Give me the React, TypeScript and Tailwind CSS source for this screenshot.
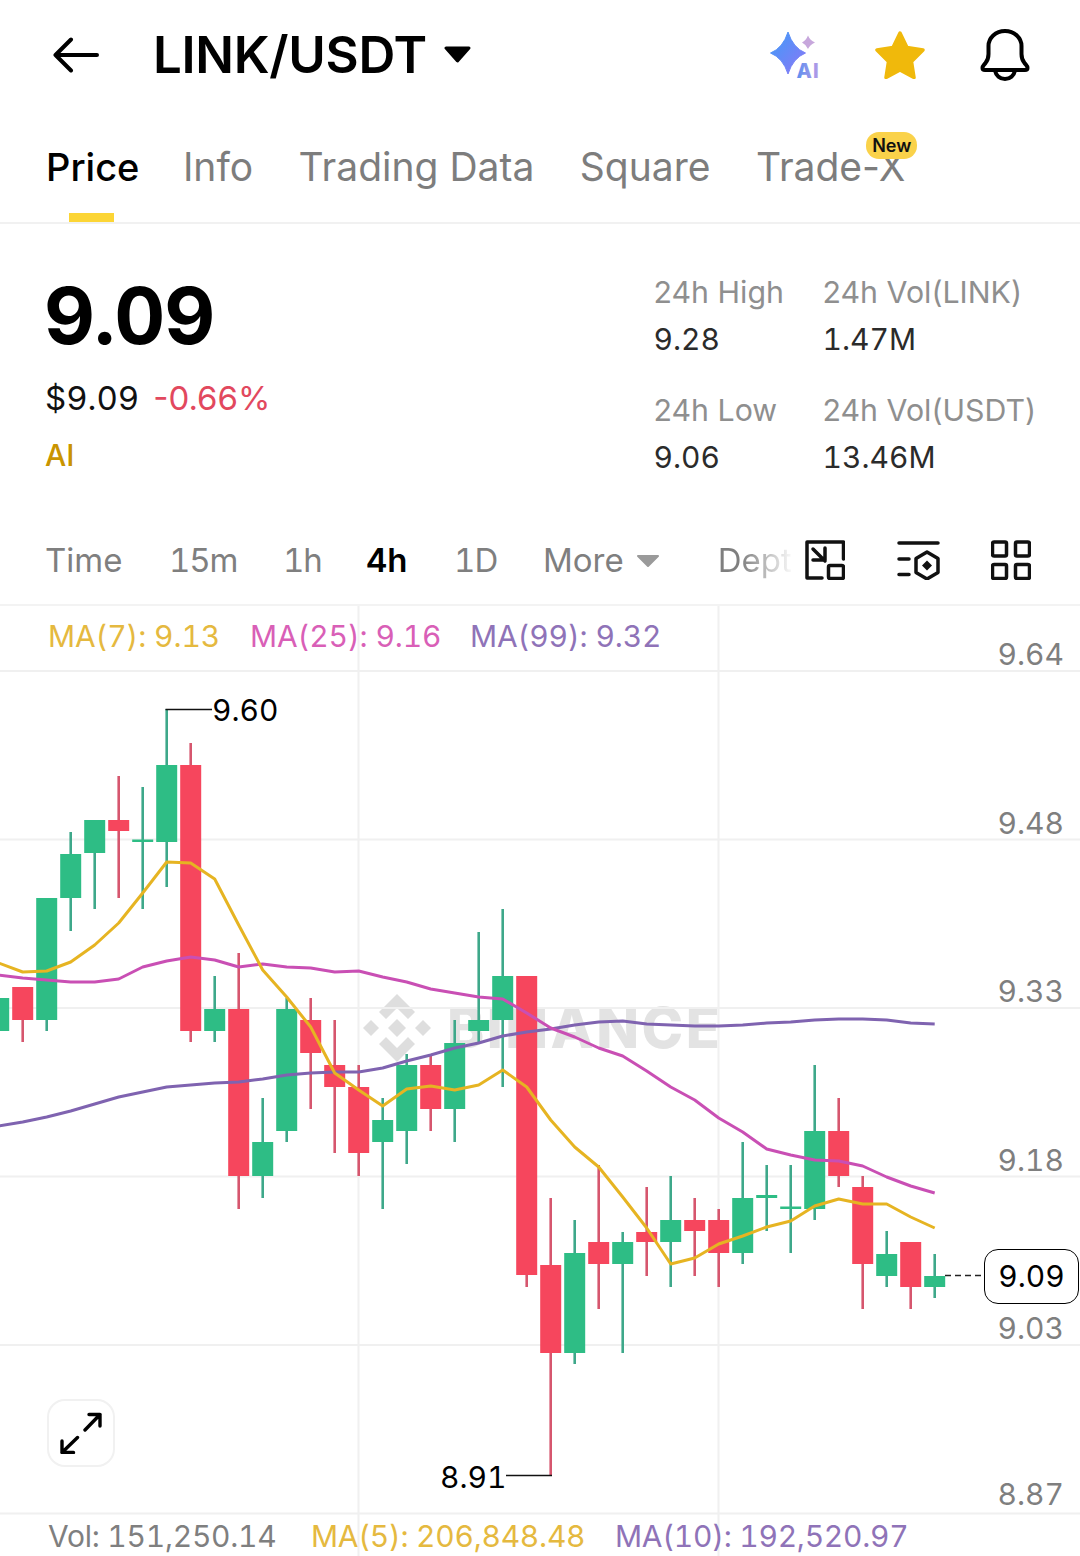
import { ReactNode } from "react";

type Candle = [high: number, top: number, bottom: number, low: number, dir: "g" | "r"];

// page-pixel y values, one candle every 24px starting at x = -1.3
const candles: Candle[] = [
  [998, 998, 1031, 1054, "g"],
  [987, 987, 1020, 1042, "r"],
  [898, 898, 1020, 1031, "g"],
  [832, 854, 898, 931, "g"],
  [820, 820, 853, 909, "g"],
  [776, 820, 831, 898, "r"],
  [787, 839.5, 842, 909, "g"],
  [709, 765, 842, 887, "g"],
  [743, 765, 1031, 1042, "r"],
  [976, 1009, 1031, 1042, "g"],
  [953, 1009, 1176, 1209, "r"],
  [1098, 1142, 1176, 1198, "g"],
  [998, 1009, 1131, 1142, "g"],
  [998, 1020, 1053, 1109, "r"],
  [1020, 1065, 1087, 1153, "r"],
  [1065, 1087, 1153, 1176, "r"],
  [1098, 1120, 1142, 1209, "g"],
  [1054, 1065, 1131, 1164, "g"],
  [1054, 1065, 1109, 1131, "r"],
  [1020, 1043, 1109, 1142, "g"],
  [932, 1020, 1031, 1043, "g"],
  [909, 976, 1020, 1087, "g"],
  [976, 976, 1275, 1287, "r"],
  [1198, 1265, 1353, 1476, "r"],
  [1220, 1253, 1353, 1364, "g"],
  [1165, 1242, 1264, 1309, "r"],
  [1232, 1242, 1264, 1353, "g"],
  [1187, 1232, 1242, 1276, "r"],
  [1176, 1220, 1242, 1287, "g"],
  [1198, 1220, 1231, 1276, "r"],
  [1209, 1220, 1253, 1287, "r"],
  [1142, 1198, 1253, 1264, "g"],
  [1165, 1195, 1198, 1231, "g"],
  [1165, 1206.5, 1209, 1253, "g"],
  [1065, 1131, 1209, 1220, "g"],
  [1098, 1131, 1176, 1187, "r"],
  [1176, 1187, 1264, 1309, "r"],
  [1231, 1254, 1276, 1287, "g"],
  [1242, 1242, 1287, 1309, "r"],
  [1254, 1276, 1287, 1298, "g"],
];

const ma7 = [963, 972, 971, 962, 945, 923, 893, 862, 863, 879, 925, 970, 997, 1027, 1073, 1090, 1106, 1089, 1086, 1090, 1085, 1070, 1087, 1120, 1147, 1167, 1197, 1228, 1264, 1258, 1244, 1236, 1227, 1221, 1206, 1199, 1204, 1204, 1217, 1228];
const ma25 = [972, 975, 978, 980, 982, 982, 979, 967, 961, 957, 960, 967, 964, 967, 968, 972, 971, 977, 982, 989, 993, 997, 999, 1013, 1028, 1037, 1048, 1056, 1071, 1087, 1100, 1118, 1132, 1149, 1155, 1160, 1161, 1166, 1177, 1186, 1193];
const ma99 = [1126, 1122, 1117, 1111, 1104, 1097, 1092, 1087, 1085, 1083, 1082, 1079, 1075, 1073, 1072, 1072, 1068, 1061, 1055, 1048, 1043, 1036, 1032, 1029, 1025, 1022, 1021, 1024, 1025, 1026, 1026, 1025, 1023, 1022, 1020, 1019, 1019, 1020, 1023, 1024];

const px = (i: number) => -1.3 + 24 * i;

function maPoints(ys: number[], start: number) {
  return ys.map((y, i) => `${px(i + start)},${y}`).join(" ");
}

function BackArrow() {
  return (
    <svg width="46" height="36" viewBox="0 0 46 36" fill="none" stroke="#000" strokeWidth="4" strokeLinecap="round" strokeLinejoin="round">
      <path d="M2.5 18H44M18 2.5 2.5 18 18 33.5" />
    </svg>
  );
}

function AiIcon() {
  return (
    <svg width="54" height="50" viewBox="768 28 54 50">
      <defs>
        <linearGradient id="ai-star" x1="0" y1="0" x2="1" y2="1">
          <stop offset="0" stopColor="#3f9cf8" />
          <stop offset="1" stopColor="#8d76f6" />
        </linearGradient>
        <linearGradient id="ai-text" x1="0" y1="0" x2="1" y2="0">
          <stop offset="0" stopColor="#5b8ff0" />
          <stop offset="1" stopColor="#b79be6" />
        </linearGradient>
      </defs>
      <path d="M788 30 Q793 46 805.500 51 Q793 56 788 72 Q783 56 770.500 51 Q783 46 788 30Z" fill="url(#ai-star)" stroke="url(#ai-star)" strokeWidth="1" strokeLinejoin="round" />
      <path d="M808 33.500 Q810 38.500 815 40.500 Q810 42.500 808 47 Q806 42.500 802 40.500 Q806 38.500 808 33.500Z" fill="#c7a7dc" />
      <text x="796.500" y="75.500" fontSize="20" fontWeight="800" letterSpacing="1" fill="url(#ai-text)" stroke="#fff" strokeWidth="3" paintOrder="stroke" fontFamily="Inter, sans-serif">AI</text>
    </svg>
  );
}

function StarIcon() {
  return (
    <svg width="50" height="48" viewBox="875 30 50 48">
      <path d="M900 32 907 46.500 923 49 911.500 60.500 914 76.500 900 69 886 76.500 888.500 60.500 877 49 893 46.500Z" fill="#f0b90b" stroke="#f0b90b" strokeWidth="3.500" strokeLinejoin="round" />
    </svg>
  );
}

function BellIcon() {
  return (
    <svg width="50" height="52" viewBox="0 0 50 52" fill="none" stroke="#000" strokeWidth="4" strokeLinecap="round" strokeLinejoin="round">
      <path d="M2.500 39c0-2 1.500-3 3-5 2.500-3 3-5.500 3-9v-8C8.500 9 15.500 2 25 2s16.500 7 16.500 15v8c0 3.500.5 6 3 9 1.500 2 3 3 3 5 0 1.300-1 2-2.500 2H5c-1.500 0-2.500-.7-2.500-2Z" />
      <path d="M15 41.500c1 5 5 8.500 10 8.500s9-3.500 10-8.500" />
    </svg>
  );
}

function ShrinkIcon() {
  return (
    <svg width="40" height="40" viewBox="805 540 40 40" fill="none" stroke="#111" strokeWidth="3.500" strokeLinecap="round" strokeLinejoin="round">
      <path d="M822 578H807V542H843.500V559" />
      <rect x="828.500" y="565.500" width="15" height="13" rx="1.500" />
      <path d="M813 549 825 561M813 560H825V548" />
    </svg>
  );
}

function SettingsIcon() {
  return (
    <svg width="44" height="40" viewBox="896 541 44 40" fill="none" stroke="#111" strokeWidth="3.500" strokeLinecap="round" strokeLinejoin="round">
      <path d="M898 544H937M898 560H908M898 575.500H908" />
      <path d="M926 553 937 559.500V573.500L926 580 915 573.500V559.500Z" />
      <path d="M926 561.500 931 566.500 926 571.500 921 566.500Z" fill="#111" stroke="none" />
    </svg>
  );
}

function GridIcon() {
  return (
    <svg width="40" height="40" viewBox="991 540 40 40" fill="none" stroke="#111" strokeWidth="3.500" strokeLinejoin="round">
      <rect x="992.500" y="542" width="14" height="14" rx="1.500" />
      <rect x="1015.500" y="542" width="14" height="14" rx="1.500" />
      <rect x="992.500" y="564.500" width="14" height="14" rx="1.500" />
      <rect x="1015.500" y="564.500" width="14" height="14" rx="1.500" />
    </svg>
  );
}

function Stat({ label, value }: { label: string; value: string }) {
  return (
    <div className="flex flex-col">
      <span className="text-[30.3px] leading-[38px] text-[#8f8f8f] whitespace-nowrap">{label}</span>
      <span className="mt-[9px] text-[30px] leading-[38px] text-[#2b2b2b] tabular-nums">{value}</span>
    </div>
  );
}

function Tab({ active, children }: { active?: boolean; children: ReactNode }) {
  return (
    <span className={active ? "relative -mr-[2px] text-[38px] leading-[46px] font-medium text-black" : "relative text-[39px] leading-[46px] text-[#7d7d7d]"}>
      {children}
      {active && <span className="absolute left-[23px] top-[69px] h-[9px] w-[45px] bg-[#fcd535]" />}
    </span>
  );
}

function PriceLabel({ className, children }: { className: string; children: ReactNode }) {
  return <span className={`absolute text-[30px] leading-[38px] tabular-nums ${className}`}>{children}</span>;
}

export default function App() {
  return (
    <div className="h-[1556px] w-[1080px] overflow-hidden bg-white font-['Inter',sans-serif]">
      {/* header */}
      <div className="flex h-[110px] items-center pl-[53px] pr-[50px]">
        <BackArrow />
        <span className="ml-[54px] text-[51px] font-semibold tracking-[-0.3px] text-black">LINK/USDT</span>
        <svg width="27" height="17" viewBox="0 0 27 17" className="ml-[17px] -mt-[2px]">
          <path d="M2 2H25L13.500 15Z" fill="#000" stroke="#000" strokeWidth="3" strokeLinejoin="round" />
        </svg>
        <div className="ml-auto flex items-center">
          <AiIcon />
          <span className="ml-[53px] flex"><StarIcon /></span>
          <span className="ml-[55px] flex"><BellIcon /></span>
        </div>
      </div>

      {/* tabs */}
      <div className="flex h-[114px] border-b-2 border-[#f1f1f1] pl-[46px] pt-[34px]">
        <div className="flex gap-[45.5px]">
          <Tab active>Price</Tab>
          <Tab>Info</Tab>
          <Tab>Trading Data</Tab>
          <Tab>Square</Tab>
          <Tab>
            Trade-X
            <span className="absolute -top-[12px] right-[-12px] rounded-[13px] bg-[#fad24a] px-[6px] text-[18px] leading-[27px] font-semibold text-[#111]">New</span>
          </Tab>
        </div>
      </div>

      {/* price + 24h stats */}
      <div className="flex h-[306px] pl-[44px] pr-[44px] pt-[46px]">
        <div className="flex flex-col">
          <span className="text-[79px] leading-[90px] font-bold tracking-[-1px] text-black tabular-nums">9.09</span>
          <div className="mt-[16px] ml-[1px] flex items-baseline gap-[14px] text-[33px] leading-[44px]">
            <span className="text-[#111] tabular-nums">$9.09</span>
            <span className="text-[#e2485e]">-0.66%</span>
          </div>
          <span className="mt-[15px] ml-[1px] text-[30px] leading-[40px] font-medium text-[#c99400]">AI</span>
        </div>
        <div className="ml-auto mt-[3px] grid grid-cols-[169px_auto] content-start gap-y-[33px]">
          <Stat label="24h High" value="9.28" />
          <Stat label="24h Vol(LINK)" value="1.47M" />
          <Stat label="24h Low" value="9.06" />
          <Stat label="24h Vol(USDT)" value="13.46M" />
        </div>
      </div>

      {/* interval toolbar */}
      <div className="flex h-[76px] items-center border-b-2 border-[#f3f3f3] pb-[12px] pl-[45px] pr-[49px] text-[33px] text-[#7f7f7f] tabular-nums">
        <span className="w-[124px]">Time</span>
        <span className="w-[114px] tracking-[-1.2px]">15m</span>
        <span className="w-[83px] tracking-[-1.2px]">1h</span>
        <span className="w-[88px] font-semibold text-black">4h</span>
        <span className="w-[89px] tracking-[-0.8px]">1D</span>
        <span>More</span>
        <svg width="24" height="14" viewBox="0 0 24 14" className="ml-[12px]">
          <path d="M2 2H22L12 12Z" fill="#9a9a9a" stroke="#9a9a9a" strokeWidth="2" strokeLinejoin="round" />
        </svg>
        <span className="ml-[58px] w-[76px] overflow-hidden bg-gradient-to-r from-[#7f7f7f] from-30% to-transparent to-100% bg-clip-text text-transparent">Depth</span>
        <div className="-mt-[2px] ml-auto flex items-center">
          <ShrinkIcon />
          <span className="ml-[52px] flex"><SettingsIcon /></span>
          <span className="ml-[50px] flex"><GridIcon /></span>
        </div>
      </div>

      {/* chart */}
      <div className="relative flex h-[950px] flex-col">
        <div className="absolute left-[361px] top-[388px] flex items-center">
          <svg width="72" height="68" viewBox="-36 -34 72 68" fill="#dedede">
            <path d="M0 -9 9 0 0 9 -9 0Z" />
            <path d="M-26 -8 -18 0 -26 8 -34 0Z" />
            <path d="M26 -8 34 0 26 8 18 0Z" />
            <path d="M0 -34 18 -16 11 -9 0 -20 -11 -9 -18 -16Z" />
            <path d="M0 34 18 16 11 9 0 20 -11 9 -18 16Z" />
          </svg>
          <span className="ml-[14px] text-[56px] leading-[68px] font-extrabold tracking-[2.5px] text-[#e3e3e3]">BINANCE</span>
        </div>

        <svg width="1080" height="950" viewBox="0 606 1080 950" className="absolute inset-0">
          {[671, 839.5, 1008, 1176.5, 1345, 1513.5].map((y) => (
            <line key={y} x1="0" x2="1080" y1={y} y2={y} stroke="#f0f0f0" strokeWidth="2" />
          ))}
          <line x1="358.500" x2="358.500" y1="606" y2="1556" stroke="#f0f0f0" strokeWidth="2" />
          <line x1="718.500" x2="718.500" y1="606" y2="1556" stroke="#f0f0f0" strokeWidth="2" />

          {candles.map(([high, top, bottom, low, dir], i) => (
            <g key={i}>
              <line x1={px(i)} x2={px(i)} y1={high} y2={low} stroke={dir === "g" ? "#3ea88a" : "#d6566e"} strokeWidth="2.6" />
              <rect x={px(i) - 10.5} y={top} width="21" height={bottom - top} fill={dir === "g" ? "#2ebd85" : "#f6465d"} />
            </g>
          ))}

          <polyline points={maPoints(ma99, 0)} fill="none" stroke="#7f63b0" strokeWidth="3" strokeLinejoin="round" />
          <polyline points={maPoints(ma25, -1)} fill="none" stroke="#c94fb4" strokeWidth="3" strokeLinejoin="round" />
          <polyline points={maPoints(ma7, 0)} fill="none" stroke="#e6b422" strokeWidth="3" strokeLinejoin="round" />

          <line x1="165.500" x2="212" y1="709.500" y2="709.500" stroke="#111" strokeWidth="1.500" />
          <line x1="506" x2="552" y1="1475.500" y2="1475.500" stroke="#111" strokeWidth="1.500" />
          <line x1="945" x2="984" y1="1275.500" y2="1275.500" stroke="#222" strokeWidth="1.500" strokeDasharray="6 4" />
        </svg>

        {/* MA legend */}
        <div className="relative flex h-[60px] items-center pl-[48px] text-[30px] leading-none tracking-[-0.1px] tabular-nums">
          <span className="w-[202px] text-[#e5b93f]">MA(7): 9.13</span>
          <span className="w-[220px] text-[#d95fb7]">MA(25): 9.16</span>
          <span className="text-[#8f73b8]">MA(99): 9.32</span>
        </div>

        <div className="grow" />

        {/* volume legend */}
        <div className="relative flex h-[40px] items-center pl-[48px] text-[30px] leading-none tracking-[-0.25px] tabular-nums">
          <span className="w-[263px] text-[#7f7f7f]">Vol: 151,250.14</span>
          <span className="w-[304px] text-[#e5b93f]">MA(5): 206,848.48</span>
          <span className="text-[#8f73b8]">MA(10): 192,520.97</span>
        </div>

        {/* overlays on the chart */}
        <PriceLabel className="right-[16px] top-[29px] text-[#7f7f7f]">9.64</PriceLabel>
        <PriceLabel className="right-[16px] top-[198px] text-[#7f7f7f]">9.48</PriceLabel>
        <PriceLabel className="right-[16px] top-[366px] text-[#7f7f7f]">9.33</PriceLabel>
        <PriceLabel className="right-[16px] top-[535px] text-[#7f7f7f]">9.18</PriceLabel>
        <PriceLabel className="right-[16px] top-[703px] text-[#7f7f7f]">9.03</PriceLabel>
        <PriceLabel className="right-[16px] top-[869px] text-[#7f7f7f]">8.87</PriceLabel>
        <PriceLabel className="left-[212px] top-[85px] text-black">9.60</PriceLabel>
        <PriceLabel className="left-[440px] top-[852px] text-black">8.91</PriceLabel>

        <div className="absolute right-[1px] top-[643px] flex h-[55px] w-[95px] items-center justify-center rounded-[14px] border-[1.5px] border-black bg-white text-[30px] text-black tabular-nums">
          9.09
        </div>

        <div className="absolute left-[47px] top-[793px] flex h-[68px] w-[68px] items-center justify-center rounded-[18px] border-2 border-[#f1f1f1] bg-white">
          <svg width="42" height="42" viewBox="60 1411 42 42" fill="none" stroke="#000" strokeWidth="3.400" strokeLinecap="round" strokeLinejoin="round">
            <path d="M85 1429 100 1413.500M89 1413.500H100V1425" />
            <path d="M77.500 1436.500 62 1451.500M62 1440V1451.500H73.500" />
          </svg>
        </div>
      </div>
    </div>
  );
}
